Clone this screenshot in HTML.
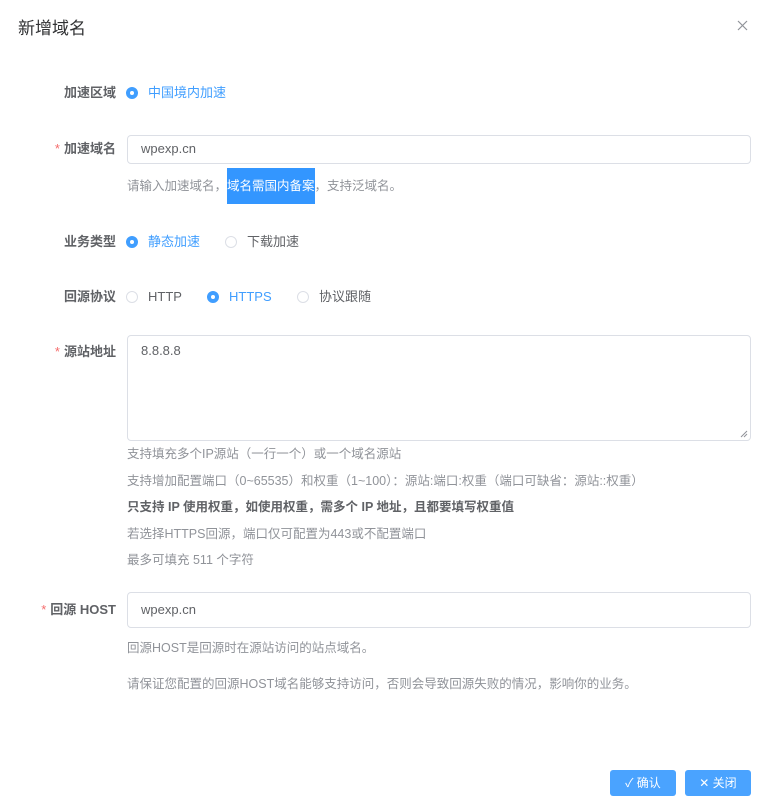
<!DOCTYPE html>
<html><head><meta charset="utf-8"><style>
*{margin:0;padding:0;box-sizing:border-box}
body{width:768px;height:812px;background:#fff;position:relative;overflow:hidden;font-family:"Liberation Sans","Noto Sans CJK SC",sans-serif;color:#606266;font-size:13px}
.a{position:absolute;white-space:nowrap;line-height:16px}
.lbl{position:absolute;right:652px;font-weight:bold;color:#606266;font-size:13px;line-height:16px;white-space:nowrap}
.star{color:#f56c6c;font-weight:normal;margin-right:4px}
.r{position:absolute;width:12px;height:12px;border-radius:50%;border:1px solid #dcdfe6;background:#fff}
.r.on{background:#409eff;border-color:#409eff}
.r.on:after{content:"";position:absolute;left:3px;top:3px;width:4px;height:4px;border-radius:50%;background:#fff}
.blue{color:#409eff}
.in{position:absolute;left:127px;width:624px;border:1px solid #dcdfe6;border-radius:4px;background:#fff}
.help{position:absolute;left:127px;color:#909399;font-size:12.5px;white-space:nowrap;line-height:16px}
.btn{position:absolute;top:770px;height:26px;width:66px;background:#4aa3ff;border-radius:3px;color:#fff;font-size:12px;line-height:26px;text-align:center}
</style></head><body>
<div class="a" style="left:18px;top:19px;font-size:17px;line-height:20px;color:#303133">新增域名</div>
<svg style="position:absolute;left:737px;top:20px" width="11" height="11"><path d="M1 1L10 10M10 1L1 10" stroke="#909399" stroke-width="1.2"/></svg>

<div class="lbl" style="top:85px">加速区域</div>
<div class="r on" style="left:126px;top:87px"></div>
<div class="a blue" style="left:148px;top:85px">中国境内加速</div>

<div class="lbl" style="top:141px"><span class="star">*</span>加速域名</div>
<div class="in" style="top:135px;height:29px"></div>
<div class="a" style="left:141px;top:141px;color:#606266">wpexp.cn</div>
<div style="position:absolute;left:227px;top:168px;width:88px;height:36px;background:#3396ff"></div>
<div class="help" style="top:178px">请输入加速域名，<span style="color:#fff">域名需国内备案</span>，支持泛域名。</div>

<div class="lbl" style="top:234px">业务类型</div>
<div class="r on" style="left:126px;top:236px"></div>
<div class="a blue" style="left:148px;top:234px">静态加速</div>
<div class="r" style="left:225px;top:236px"></div>
<div class="a" style="left:247px;top:234px">下载加速</div>

<div class="lbl" style="top:289px">回源协议</div>
<div class="r" style="left:126px;top:291px"></div>
<div class="a" style="left:148px;top:289px">HTTP</div>
<div class="r on" style="left:207px;top:291px"></div>
<div class="a blue" style="left:229px;top:289px">HTTPS</div>
<div class="r" style="left:297px;top:291px"></div>
<div class="a" style="left:319px;top:289px">协议跟随</div>

<div class="lbl" style="top:344px"><span class="star">*</span>源站地址</div>
<div class="in" style="top:335px;height:106px"></div>
<svg style="position:absolute;left:740px;top:430px" width="8" height="8"><path d="M7 1L1 7M7 4L4 7" stroke="#909399" stroke-width="1"/></svg>
<div class="a" style="left:141px;top:343px">8.8.8.8</div>
<div class="help" style="top:446px">支持填充多个IP源站（一行一个）或一个域名源站</div>
<div class="help" style="top:473px">支持增加配置端口（0~65535）和权重（1~100）：源站:端口:权重（端口可缺省：源站::权重）</div>
<div class="help" style="top:499px;font-weight:bold;color:#606266">只支持 IP 使用权重，如使用权重，需多个 IP 地址，且都要填写权重值</div>
<div class="help" style="top:526px">若选择HTTPS回源，端口仅可配置为443或不配置端口</div>
<div class="help" style="top:552px">最多可填充 511 个字符</div>

<div class="lbl" style="top:602px"><span class="star">*</span>回源 HOST</div>
<div class="in" style="top:592px;height:36px"></div>
<div class="a" style="left:141px;top:602px">wpexp.cn</div>
<div class="help" style="top:640px">回源HOST是回源时在源站访问的站点域名。</div>
<div class="help" style="top:676px">请保证您配置的回源HOST域名能够支持访问，否则会导致回源失败的情况，影响你的业务。</div>

<div class="btn" style="left:610px">✓ 确认</div>
<div class="btn" style="left:685px">✕ 关闭</div>
</body></html>
